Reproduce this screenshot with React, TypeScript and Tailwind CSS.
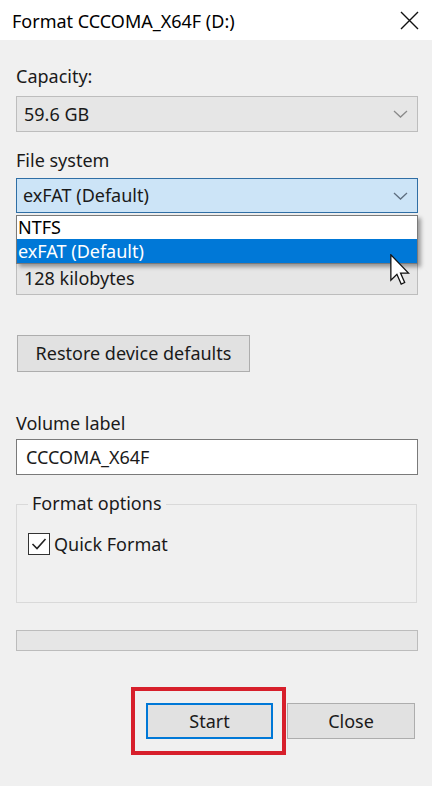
import React from "react";

const Chevron = ({ color = "#7a7a7a" }: { color?: string }) => (
  <svg width="15" height="8" viewBox="0 0 15 8" fill="none">
    <path d="M1 1 L7.5 7 L14 1" stroke={color} strokeWidth="1.3" />
  </svg>
);

export default function App() {
  return (
    <div
      className="w-[432px] h-[786px] overflow-hidden bg-[#f0f0f0] text-[18px] text-[#1a1a1a]"
      style={{ fontFamily: '"Noto Sans", "Open Sans", sans-serif' }}
    >
      {/* Title bar */}
      <div className="h-[40px] bg-white flex items-center justify-between pl-[12px] pr-[13px]">
        <span className="text-[18px] text-black leading-none pt-[1px]">Format CCCOMA_X64F (D:)</span>
        <svg width="19" height="19" viewBox="0 0 19 19" fill="none">
          <path d="M1 1 L18 18 M18 1 L1 18" stroke="#111" strokeWidth="1.4" />
        </svg>
      </div>

      <div className="flex flex-col pl-[16px] pr-[14px]">
        {/* Capacity */}
        <div className="mt-[24px] h-[24px] leading-[24px]">Capacity:</div>
        <div className="mt-[8px] h-[36px] bg-[#e6e6e6] border border-[#bdbdbd] flex items-center justify-between pl-[7px] pr-[9px]">
          <span>59.6 GB</span>
          <Chevron color="#8a8a8a" />
        </div>

        {/* File system */}
        <div className="mt-[16px] h-[24px] leading-[24px]">File system</div>
        <div className="relative mt-[6px]">
          <div className="h-[35px] bg-[#cce4f7] border border-[#2f6ea5] flex items-center justify-between pl-[6px] pr-[9px]">
            <span>exFAT (Default)</span>
            <Chevron color="#5f6f80" />
          </div>
          {/* dropdown list */}
          <div className="absolute left-0 right-0 top-[37px] z-10 bg-white border border-[#7a7a7a] shadow-[3px_3px_4px_rgba(0,0,0,0.35)]">
            <div className="h-[23px] leading-[23px] pl-[1px] text-black">NTFS</div>
            <div className="h-[24px] leading-[24px] pl-[1px] bg-[#0078d7] text-white">exFAT (Default)</div>
          </div>
        </div>

        {/* Allocation unit size (label hidden behind list) */}
        <div className="mt-[14px] h-[24px]" />
        <div className="relative mt-[8px] h-[36px] bg-[#e6e6e6] border border-[#bdbdbd] flex items-end justify-between pl-[7px] pr-[9px] pb-[4px]">
          <span className="leading-[24px]">128 kilobytes</span>
          <svg
            className="absolute left-[373px] top-[-6px] z-20"
            width="20"
            height="31"
            viewBox="0 0 12.5 19.5"
            fill="none"
          >
            <path
              d="M0.5 0.5 L0.5 16.5 L4.3 12.8 L7 18.9 L9.2 17.9 L6.6 12 L11.6 12 Z"
              fill="white"
              stroke="#111"
              strokeWidth="0.8"
              strokeLinejoin="miter"
            />
          </svg>
        </div>

        {/* Restore device defaults */}
        <div className="mt-[40px]">
          <button className="ml-[1px] w-[233px] h-[37px] bg-[#e1e1e1] border border-[#adadad] text-[18px] text-[#1a1a1a]">
            Restore device defaults
          </button>
        </div>

        {/* Volume label */}
        <div className="mt-[39px] h-[24px] leading-[24px]">Volume label</div>
        <div className="mt-[4px] h-[36px] bg-white border border-[#7a7a7a] flex items-center pl-[9px]">
          <span>CCCOMA_X64F</span>
        </div>

        {/* Format options group */}
        <div className="relative mt-[29px] h-[99px] border border-[#d9d9d9] mr-[1px]">
          <div className="absolute left-[11px] top-[-14px] px-[4px] bg-[#f0f0f0] h-[24px] leading-[24px]">
            Format options
          </div>
          <div className="flex items-center mt-[27px] ml-[11px] gap-[4px]">
            <div className="w-[22px] h-[22px] border-[1.5px] border-[#333] bg-white flex items-center justify-center">
              <svg width="16" height="14" viewBox="0 0 16 14" fill="none">
                <path d="M1.5 7 L6 11.5 L14.5 2" stroke="#222" strokeWidth="1.6" />
              </svg>
            </div>
            <span className="leading-[24px]">Quick Format</span>
          </div>
        </div>

        {/* Progress bar */}
        <div className="mt-[27px] h-[21px] bg-[#e6e6e6] border border-[#bcbcbc]" />

        {/* Buttons */}
        <div className="mt-[52px] flex justify-end gap-[14px] mr-[3px]">
          <div className="relative">
            <div className="absolute left-[-15px] right-[-13px] top-[-16px] bottom-[-16px] border-[4px] border-[#d71f2b]" />
            <button className="relative w-[127px] h-[36px] bg-[#e1e1e1] border-2 border-[#0078d7] text-[18px] text-[#1a1a1a]">
              Start
            </button>
          </div>
          <button className="w-[128px] h-[36px] bg-[#e1e1e1] border border-[#adadad] text-[18px] text-[#1a1a1a]">
            Close
          </button>
        </div>
      </div>
    </div>
  );
}
